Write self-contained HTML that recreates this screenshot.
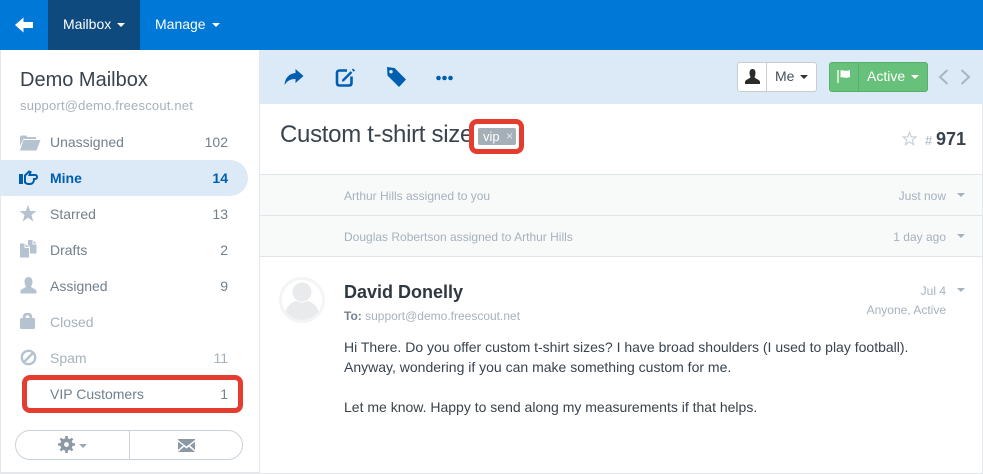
<!DOCTYPE html>
<html><head><meta charset="utf-8"><style>
html,body{margin:0;padding:0}
body{width:983px;height:474px;overflow:hidden;position:relative;background:#e4e8ec;font-family:"Liberation Sans",sans-serif;font-size:14px;color:#72808e}
.a{position:absolute;white-space:nowrap}
svg{position:absolute;display:block}
.caret{position:absolute;width:0;height:0;border-left:4px solid transparent;border-right:4px solid transparent;border-top:4px solid #fff}
.n{left:50px;line-height:20px;font-size:14px;color:#72808e}
.c{right:755px;line-height:20px;font-size:14px;color:#72808e;text-align:right}
.l{color:#a5b2bd}
</style></head><body>
<div class="a" style="left:0;top:0;width:983px;height:50px;background:#0078d7"></div>
<div class="a" style="left:48px;top:0;width:92px;height:50px;background:#0f4a7f"></div>
<svg style="left:14px;top:15px" width="21" height="19" viewBox="0 0 21 19"><path d="M1 10 9.500 2.500V7H19V13H9.500V17.500Z" fill="#fff"/></svg>
<div class="a" style="left:63px;top:14px;line-height:20px;color:#fff">Mailbox</div><div class="caret" style="left:117px;top:23px"></div>
<div class="a" style="left:155px;top:14px;line-height:20px;color:#fff">Manage</div><div class="caret" style="left:212px;top:23px"></div>

<div class="a" style="left:1px;top:50px;width:258px;height:422px;background:#fff"></div>
<div class="a" style="left:20px;top:67px;font-size:20px;line-height:26px;color:#39434d">Demo Mailbox</div>
<div class="a" style="left:20px;top:96px;font-size:13px;line-height:20px;color:#a5b2bd;letter-spacing:.2px">support@demo.freescout.net</div>

<svg style="left:19px;top:134px" width="22" height="17" viewBox="0 0 22 17"><path d="M1 4V2.500L2 1.500H7L8.500 3H17V5H4.500L1 12Z M4.500 6H21.500L17.500 16.500H1Z" fill="#b5c2d0"/></svg>
<div class="a n" style="top:132px">Unassigned</div><div class="a c" style="top:132px">102</div>

<div class="a" style="left:1px;top:160px;width:247px;height:36px;background:#dceaf7;border-radius:0 18px 18px 0"></div>
<svg style="left:19px;top:170px" width="20" height="16" viewBox="0 0 20 16"><path d="M0 4H4V14H0Z" fill="#005eb0"/><path d="M6 5.500 10 1.500 11.500 2 10.500 5H16.500C18.500 5 18.500 9 16.500 9H15C15 12 13.500 14 11 14H8.500L6 12.500Z" fill="none" stroke="#005eb0" stroke-width="2"/></svg>
<div class="a n" style="top:168px;color:#005eb0;font-weight:bold">Mine</div><div class="a c" style="top:168px;color:#005eb0;font-weight:bold">14</div>

<svg style="left:19px;top:205px" width="18" height="17" viewBox="0 0 18 17"><path d="M9 0 11.200 6H17.500L12.500 10 14.300 16.500 9 12.800 3.700 16.500 5.500 10 .5 6H6.800Z" fill="#b5c2d0"/></svg>
<div class="a n" style="top:204px">Starred</div><div class="a c" style="top:204px">13</div>

<svg style="left:20px;top:240px" width="17" height="18" viewBox="0 0 17 18"><path d="M8 0H12.500V4.500H16.500V13.500H10V7L8 5Z M13.500 .5 16.500 3.500H13.500Z" fill="#b5c2d0"/><path d="M0 3.500H4.500V8H9V17.500H0Z M5.500 4 9 7H5.500Z" fill="#b5c2d0"/></svg>
<div class="a n" style="top:240px">Drafts</div><div class="a c" style="top:240px">2</div>

<svg style="left:20px;top:277px" width="17" height="17" viewBox="0 0 17 17"><path d="M8.500 0C11 0 12.500 2 12.500 4.500 12.500 7 11.500 8.500 11 9.500 11 11 16.500 11.500 16.500 14.500V16.500H.5V14.500C.5 11.500 6 11 6 9.500 5.500 8.500 4.500 7 4.500 4.500 4.500 2 6 0 8.500 0Z" fill="#b5c2d0"/></svg>
<div class="a n" style="top:276px">Assigned</div><div class="a c" style="top:276px">9</div>

<svg style="left:20px;top:313px" width="15" height="16" viewBox="0 0 15 16"><path d="M0 6.500Q0 5 1.500 5H13.500Q15 5 15 6.500V14.500Q15 16 13.500 16H1.500Q0 16 0 14.500Z" fill="#b5c2d0"/><path d="M4.200 6V3.800A3.300 3 0 0 1 10.800 3.800V6" fill="none" stroke="#b5c2d0" stroke-width="2.800"/></svg>
<div class="a n l" style="top:312px">Closed</div>

<svg style="left:20px;top:349px" width="17" height="17" viewBox="0 0 17 17"><circle cx="8.500" cy="8.500" r="6.700" fill="none" stroke="#b5c2d0" stroke-width="2.400"/><path d="M4 13 13 4" stroke="#b5c2d0" stroke-width="2.400"/></svg>
<div class="a n l" style="top:348px">Spam</div><div class="a c l" style="top:348px">11</div>

<div class="a" style="left:22px;top:375px;width:211px;height:28px;border:5px solid #e53c30;border-radius:8px"></div>
<div class="a n" style="top:384px">VIP Customers</div><div class="a c" style="top:384px">1</div>

<div class="a" style="left:15px;top:430px;width:226px;height:28px;border:1px solid #c9d2da;border-radius:15px"></div>
<div class="a" style="left:129px;top:431px;width:1px;height:28px;background:#c9d2da"></div>
<svg style="left:58px;top:436px" width="17" height="17" viewBox="0 0 17 17"><circle cx="8.500" cy="8.500" r="4.500" fill="none" stroke="#8b98a5" stroke-width="3.400"/><path d="M8.500 0V17M0 8.500H17M2.500 2.500 14.500 14.500M14.500 2.500 2.500 14.500" stroke="#8b98a5" stroke-width="2.600"/><circle cx="8.500" cy="8.500" r="2.400" fill="#fff"/></svg>
<div class="caret" style="left:79px;top:444px;border-top-color:#9aa6b1"></div>
<svg style="left:178px;top:439px" width="17" height="13" viewBox="0 0 17 13"><path d="M0 0H17V1L8.500 7.500 0 1Z M0 2.800 5 6.500 0 11Z M17 2.800 12 6.500 17 11Z M0 13 6 7.800 8.500 9.500 11 7.800 17 13Z" fill="#8b98a5"/></svg>

<div class="a" style="left:260px;top:51px;width:723px;height:423px;background:#fff"></div>
<div class="a" style="left:982px;top:50px;width:1px;height:424px;background:#e4e8ec"></div>
<div class="a" style="left:260px;top:473px;width:723px;height:1px;background:#e4e8ec"></div>
<div class="a" style="left:260px;top:51px;width:723px;height:53px;background:#dceaf7"></div>

<svg style="left:284px;top:68px" width="20" height="18" viewBox="0 0 20 18"><path d="M11.500 1 19.500 8 11.500 15V11C6.500 11 3.500 12.500 .5 17 1 10 5 5.500 11.500 5Z" fill="#005eb0"/></svg>
<svg style="left:335px;top:67px" width="22" height="21" viewBox="0 0 22 21"><path d="M12 3.500H4.500Q2 3.500 2 6V16Q2 18.500 4.500 18.500H14Q16.500 18.500 16.500 16V9.500" fill="none" stroke="#005eb0" stroke-width="2.600"/><path d="M8 13.500 16.500 5" stroke="#005eb0" stroke-width="2.400"/><path d="M6.800 14.800 7.500 12 9.500 14Z" fill="#005eb0"/><path d="M18 1.500 20 3.500 18.800 4.700 16.800 2.700Z" fill="#005eb0"/></svg>
<svg style="left:386px;top:67px" width="21" height="20" viewBox="0 0 21 20"><path d="M1 0 8.500 1 20 12.500 13 20 1.500 8.500Z" fill="#005eb0"/><circle cx="5" cy="4.700" r="1.700" fill="#dceaf7"/></svg>
<svg style="left:436px;top:75px" width="17" height="6" viewBox="0 0 17 6"><circle cx="2.500" cy="3" r="2.300" fill="#005eb0"/><circle cx="8.500" cy="3" r="2.300" fill="#005eb0"/><circle cx="14.500" cy="3" r="2.300" fill="#005eb0"/></svg>

<div class="a" style="left:737px;top:62px;width:78px;height:28px;background:#fff;border:1px solid #c8ccd0;border-radius:3px"></div>
<div class="a" style="left:766px;top:63px;width:1px;height:28px;background:#c8ccd0"></div>
<svg style="left:745px;top:69px" width="15" height="15" viewBox="0 0 15 15"><path d="M7.500 0C9.500 0 10.500 1.800 10.500 3.800 10.500 5.800 10 7 9.500 8 9.500 9.500 15 10.500 15 13V15H0V13C0 10.500 5.500 9.500 5.500 8 5 7 4.500 5.800 4.500 3.800 4.500 1.800 5.500 0 7.500 0Z" fill="#2b2b2b"/></svg>
<div class="a" style="left:775px;top:66px;line-height:20px;color:#44505c">Me</div><div class="caret" style="left:800px;top:75px;border-top-color:#333"></div>

<div class="a" style="left:829px;top:62px;width:97px;height:28px;background:#68c17a;border:1px solid #56b168;border-radius:3px"></div>
<div class="a" style="left:858px;top:63px;width:1px;height:28px;background:#56b168"></div>
<svg style="left:837px;top:69px" width="15" height="15" viewBox="0 0 15 15"><path d="M1 1V14" stroke="#fff" stroke-width="1.300"/><path d="M3.500 1.500C6 .5 8 3 13 1V8C8 10 6 7.500 3.500 8.500Z" fill="#fff"/></svg>
<div class="a" style="left:867px;top:66px;line-height:20px;color:#fff">Active</div><div class="caret" style="left:911px;top:75px"></div>
<svg style="left:938px;top:69px" width="11" height="16" viewBox="0 0 11 16"><path d="M9.500 1 2 8 9.500 15" fill="none" stroke="#a9b5c0" stroke-width="2"/></svg>
<svg style="left:960px;top:69px" width="11" height="16" viewBox="0 0 11 16"><path d="M1.500 1 9 8 1.500 15" fill="none" stroke="#a9b5c0" stroke-width="2"/></svg>

<div class="a" style="left:280px;top:120px;font-size:24px;line-height:30px;color:#39434d;letter-spacing:-.3px">Custom t-shirt sizes</div>
<div class="a" style="left:469px;top:119px;width:45px;height:25px;border:5px solid #e53c30;border-radius:8px;background:#fff"></div>
<div class="a" style="left:478px;top:128px;width:38px;height:17px;background:#a5afb8;border-radius:2px"></div>
<div class="a" style="left:483px;top:128px;font-size:13px;line-height:17px;color:#fff">vip</div>
<div class="a" style="left:506px;top:128px;font-size:12px;line-height:17px;color:#e4e8eb">×</div>

<svg style="left:902px;top:131px" width="15" height="15" viewBox="0 0 17 17"><path d="M8.500 1.500 10.500 6.700H16L11.600 10 13.200 15.500 8.500 12.300 3.800 15.500 5.400 10 1 6.700H6.500Z" fill="none" stroke="#c5ced6" stroke-width="1.200"/></svg>
<div class="a" style="left:925px;top:131px;font-size:13px;line-height:20px;color:#a5b2bd">#</div>
<div class="a" style="left:936px;top:128px;font-size:18px;line-height:22px;font-weight:bold;color:#39434d">971</div>

<div class="a" style="left:260px;top:174px;width:722px;height:82px;background:#f8f9f9"></div>
<div class="a" style="left:260px;top:174px;width:722px;height:1px;background:#dfe5e8"></div>
<div class="a" style="left:260px;top:215px;width:722px;height:1px;background:#dfe5e8"></div>
<div class="a" style="left:260px;top:256px;width:722px;height:1px;background:#dfe5e8"></div>
<div class="a" style="left:344px;top:186px;font-size:12px;line-height:20px;color:#a5b2bd">Arthur Hills assigned to you</div>
<div class="a" style="right:37px;top:186px;font-size:12px;line-height:20px;color:#a5b2bd">Just now</div>
<div class="caret" style="left:957px;top:193px;border-top-color:#a5b2bd"></div>
<div class="a" style="left:344px;top:227px;font-size:12px;line-height:20px;color:#a5b2bd">Douglas Robertson assigned to Arthur Hills</div>
<div class="a" style="right:37px;top:227px;font-size:12px;line-height:20px;color:#a5b2bd">1 day ago</div>
<div class="caret" style="left:957px;top:234px;border-top-color:#a5b2bd"></div>

<div class="a" style="left:279px;top:277px;width:40px;height:40px;border:3px solid #f3f4f5;border-radius:50%;background:#fff"></div>
<svg style="left:279px;top:277px" width="46" height="46" viewBox="0 0 46 46"><clipPath id="av"><circle cx="23" cy="23" r="20"/></clipPath><g clip-path="url(#av)"><ellipse cx="23" cy="36.500" rx="16.500" ry="13.500" fill="#e8eaec"/><circle cx="23" cy="15" r="10" fill="#e8eaec" stroke="#fff" stroke-width="1"/></g></svg>

<div class="a" style="left:344px;top:280px;font-size:18px;line-height:24px;font-weight:bold;color:#2f3841">David Donelly</div>
<div class="a" style="left:344px;top:306px;font-size:12px;line-height:20px;color:#a5b2bd"><b style="color:#72808e">To:</b> support@demo.freescout.net</div>
<div class="a" style="right:37px;top:281px;font-size:12px;line-height:20px;color:#a5b2bd">Jul 4</div>
<div class="caret" style="left:957px;top:288px;border-top-color:#a5b2bd"></div>
<div class="a" style="right:37px;top:300px;font-size:12px;line-height:20px;color:#a5b2bd">Anyone, Active</div>

<div class="a" style="left:344px;top:337px;line-height:20px;color:#39434d">Hi There. Do you offer custom t-shirt sizes? I have broad shoulders (I used to play football).</div>
<div class="a" style="left:344px;top:357px;line-height:20px;color:#39434d">Anyway, wondering if you can make something custom for me.</div>
<div class="a" style="left:344px;top:397px;line-height:20px;color:#39434d">Let me know. Happy to send along my measurements if that helps.</div>
</body></html>
